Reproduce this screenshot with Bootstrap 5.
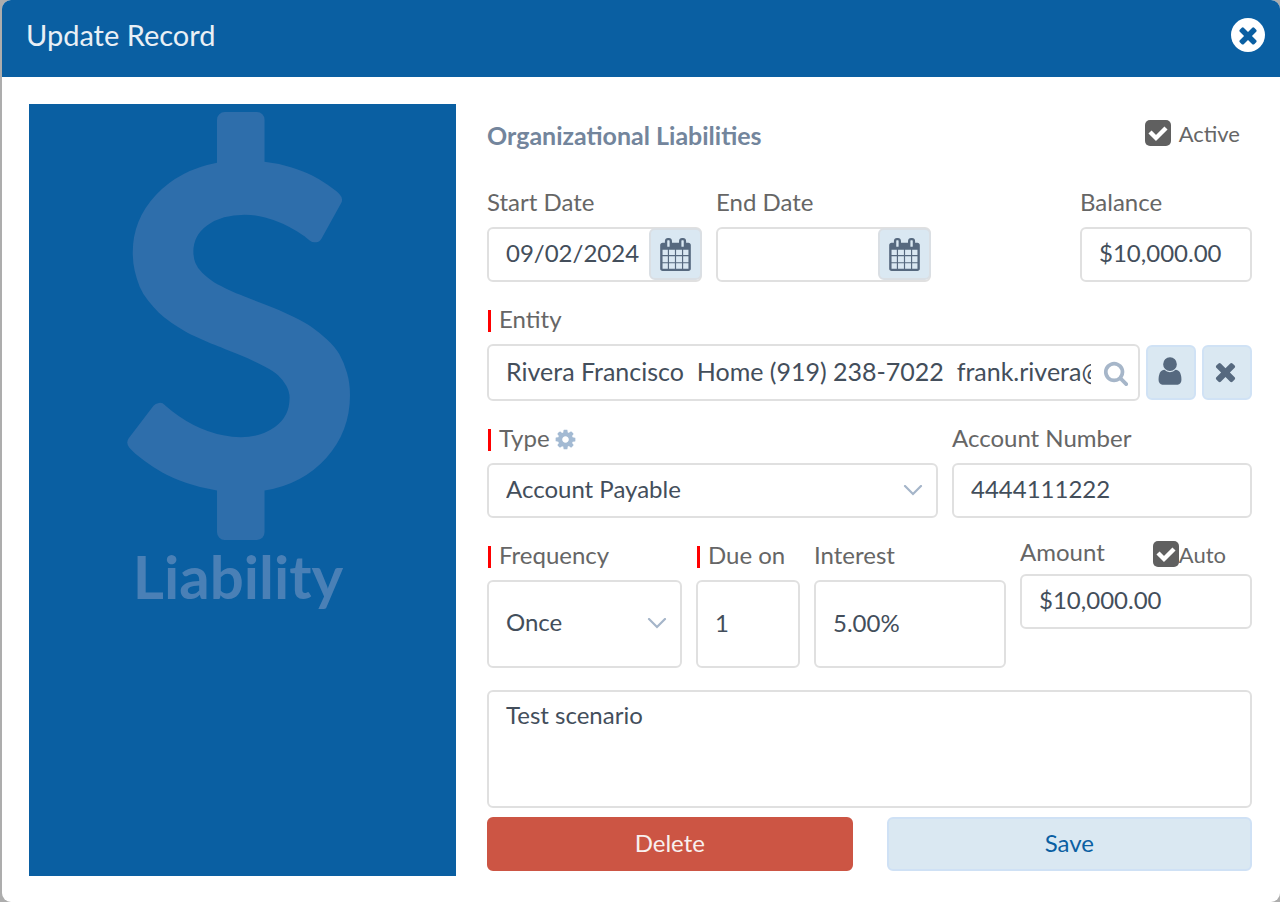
<!DOCTYPE html>
<html lang="en">
<head>
<meta charset="utf-8">
<meta name="viewport" content="width=device-width, initial-scale=1">
<title>Update Record</title>
<link href="https://cdn.jsdelivr.net/npm/bootstrap@5.3.0/dist/css/bootstrap.min.css" rel="stylesheet">
<style>
:root { --brand: #0a5fa2; --ink: #434e5b; --label: #666; --line: #e0e0e0; --pale: #dae8f2; --slate: #56697f; }
body { background: #adadad; font-family: Lato, "Open Sans", sans-serif; font-size: 24px; line-height: 24px; color: var(--ink); }
.dialog-box { margin-left: 2px; min-height: 100vh; border-radius: 9px; overflow: hidden; }
.dialog-head { background: var(--brand); height: 77px; padding: 0 15px 8px 24px; }
.dialog-head h1 { font-size: 29px; line-height: 36px; font-weight: 400; color: #e9eff5; }
.round-close { width: 34px; height: 34px; color: var(--brand); }
.dialog-main { display: grid; grid-template-columns: 427fr 765fr; gap: 31px; padding: 27px 28px 26px 27px; }
.kind-panel { background: var(--brand); padding-top: 8px; padding-right: 9px; }
.kind-panel svg { fill: #2e6eab; }
.kind-name { font-size: 60px; line-height: 64px; font-weight: 700; color: #4a80b6; margin-top: 4px; }
.form-side { min-width: 0; padding-bottom: 5px; }
.form-top { height: 62px; margin-bottom: 25px; }
.form-top h2 { font-size: 25px; line-height: 24px; color: #73859c; font-weight: 700; }
label { color: var(--label); white-space: nowrap; }
.field-label { display: flex; align-items: center; margin-bottom: 12px; height: 24px; padding-bottom: 2px; }
.needed::before { content: ""; width: 3px; height: 22px; background: #f00; margin: 4px 8px 0 1px; }
.form-line { display: grid; gap: 14px; margin-bottom: 26px; }
.dates { grid-template-columns: 215fr 215fr 121fr 172fr; }
.kinds { grid-template-columns: 451fr 300fr; margin-bottom: 22px; }
.terms { grid-template-columns: 195fr 104fr 192fr 232fr; margin-bottom: 22px; }
.form-line > div { min-width: 0; }
.field { height: 55px; border: 2px solid var(--line); border-radius: 6px; padding: 0 16px 4px 17px; font-size: 24px; line-height: 28px; color: var(--ink); background-color: #fff; }
.field-tall { height: 88px; }
.with-button { display: flex; padding: 0; }
.with-button input { border: 0; outline: 0; min-width: 0; flex: 1; padding: 0 0 4px 17px; color: inherit; background: transparent; }
.icon-btn { background: var(--pale); border: 2px solid #d0e2f5; border-radius: 6px; color: var(--slate); padding: 0; display: flex; align-items: center; justify-content: center; flex: none; }
.date-btn { width: 53px; border-color: #dadfe4; margin: -1px -2px 0 0; }
.side-btn { width: 50px; height: 55px; }
.side-btn svg { margin-bottom: 3px; margin-right: 3px; }
.entity-row { display: flex; align-items: center; gap: 6px; height: 57px; }
.entity-field { height: 57px; flex: 1; min-width: 0; }
.entity-field input { font-size: 25px; }
.search-btn { border: 0; background: none; padding: 1px 9px 0 12px; color: #a6b6c9; flex: none; }
select.field { background-position: right 13px center; background-size: 20px 12px; background-image: url("data:image/svg+xml,%3Csvg xmlns='http://www.w3.org/2000/svg' viewBox='0 0 20 12'%3E%3Cpath d='M2 1l8 8 8-8' fill='none' stroke='%23a5b5c9' stroke-width='2.2' stroke-linecap='round'/%3E%3C/svg%3E"); }
.tick { width: 26px; height: 26px; margin: 0; border: 0; border-radius: 5px !important; flex: none; }
.tick:checked { background-color: #606060; background-size: 26px; background-image: url("data:image/svg+xml,%3Csvg xmlns='http://www.w3.org/2000/svg' viewBox='0 0 26 26'%3E%3Cpath d='M5 12l6 6L21 8' fill='none' stroke='%23fff' stroke-width='4.4'/%3E%3C/svg%3E"); }
.check-text { font-size: 22px; padding-top: 2px; }
.terms > .lowered { padding-top: 4px; }
.amount-head { height: 24px; margin-bottom: 10px; padding-right: 26px; }
.note { height: 118px; padding: 9px 16px 10px 17px; resize: none; margin-bottom: 9px; }
.form-end { gap: 34px; }
.form-end .btn { height: 54px; flex: 1; font-size: 24px; line-height: 24px; border-radius: 6px; border-width: 2px; padding: 0 0 3px; }
.btn-remove, .btn-remove:hover { background: #cc5544; border-color: #cc5544; color: #f8f0ef; }
.btn-keep, .btn-keep:hover { background: var(--pale); border-color: #cfe1f5; color: var(--brand); }
</style>
</head>
<body>
<svg class="d-none" aria-hidden="true">
  <symbol id="times" viewBox="0 0 1792 1792"><path d="M1490 1322q0 40-28 68l-136 136q-28 28-68 28t-68-28l-294-294-294 294q-28 28-68 28t-68-28l-136-136q-28-28-28-68t28-68l294-294-294-294q-28-28-28-68t28-68l136-136q28-28 68-28t68 28l294 294 294-294q28-28 68-28t68 28l136 136q28 28 28 68t-28 68l-294 294 294 294q28 28 28 68z"/></symbol>
  <symbol id="calendar" viewBox="0 0 1792 1792"><path d="M192 1664h288v-288h-288v288zm352 0h320v-288h-320v288zm-352-352h288v-320h-288v320zm352 0h320v-320h-320v320zm-352-384h288v-288h-288v288zm736 736h320v-288h-320v288zm-384-736h320v-288h-320v288zm768 736h288v-288h-288v288zm-384-352h320v-320h-320v320zm-352-864v-288q0-13-9.500-22.500t-22.500-9.500h-64q-13 0-22.500 9.500t-9.500 22.500v288q0 13 9.500 22.500t22.500 9.500h64q13 0 22.500-9.500t9.500-22.500zm736 864h288v-320h-288v320zm-384-384h320v-288h-320v288zm384 0h288v-288h-288v288zm32-480v-288q0-13-9.500-22.500t-22.500-9.500h-64q-13 0-22.500 9.500t-9.500 22.500v288q0 13 9.500 22.500t22.500 9.500h64q13 0 22.500-9.500t9.500-22.500zm384-64v1280q0 52-38 90t-90 38h-1408q-52 0-90-38t-38-90v-1280q0-52 38-90t90-38h128v-96q0-66 47-113t113-47h64q66 0 113 47t47 113v96h384v-96q0-66 47-113t113-47h64q66 0 113 47t47 113v96h128q52 0 90 38t38 90z"/></symbol>
</svg>

<main class="dialog-box bg-white">
  <header class="dialog-head d-flex align-items-center justify-content-between">
    <h1 class="m-0">Update Record</h1>
    <button type="button" class="round-close btn bg-white rounded-circle p-0 border-0 d-flex align-items-center justify-content-center" aria-label="Close">
      <svg width="26" height="26" fill="currentColor"><use href="#times"/></svg>
    </button>
  </header>

  <div class="dialog-main">
    <aside class="kind-panel d-flex flex-column align-items-center">
      <svg width="223" height="428" viewBox="44 0 934 1792" aria-hidden="true"><path d="M978 1185q0 153-99.500 263.500t-258.500 136.500v175q0 14-9 23t-23 9h-135q-13 0-22.500-9.500t-9.500-22.500v-175q-66-9-127.500-31t-101.500-44.500-74-48-46.500-37.500-17.500-18q-17-21-2-41l103-135q7-10 23-12 15-2 24 9l2 2q113 99 243 125 37 8 74 8 81 0 142.500-43t61.500-122q0-28-15-53t-33.500-42-58.500-37.500-66-32-80-32.500q-39-16-61.500-25t-61.500-26.500-62.500-31-56.500-35.500-53.500-42.500-43.500-49-35.500-58-21-66.500-8.500-78q0-138 98-242t255-134v-180q0-13 9.500-22.500t22.500-9.500h135q14 0 23 9t9 23v176q57 6 110.500 23t87 33.500 63.500 37.500 39 29 15 14q17 18 5 38l-81 146q-8 15-23 16-14 3-27-7-3-3-14.500-12t-39-26.500-58.500-32-74.500-26-85.500-11.500q-95 0-155 43t-60 111q0 26 8.500 48t29.500 41.500 39.500 33 56 31 60.500 27 70 27.500q53 20 81 31.500t76 35 75.500 42.500 62 50 53 63.500 31.500 76.500 13 94z"/></svg>
      <div class="kind-name">Liability</div>
    </aside>

    <form class="form-side">
      <div class="form-top d-flex align-items-center justify-content-between">
        <h2 class="m-0">Organizational Liabilities</h2>
        <div class="d-flex align-items-center gap-2 pe-2 me-1 pb-1">
          <input type="checkbox" class="form-check-input tick" id="active" checked>
          <label for="active" class="check-text">Active</label>
        </div>
      </div>

      <div class="form-line dates">
        <div>
          <label class="field-label" for="start">Start Date</label>
          <div class="field with-button">
            <input type="text" id="start" value="09/02/2024">
            <button type="button" class="icon-btn date-btn" aria-label="Pick start date"><svg width="33" height="33" fill="currentColor"><use href="#calendar"/></svg></button>
          </div>
        </div>
        <div>
          <label class="field-label" for="end">End Date</label>
          <div class="field with-button">
            <input type="text" id="end">
            <button type="button" class="icon-btn date-btn" aria-label="Pick end date"><svg width="33" height="33" fill="currentColor"><use href="#calendar"/></svg></button>
          </div>
        </div>
        <div></div>
        <div>
          <label class="field-label" for="balance">Balance</label>
          <input type="text" class="form-control field" id="balance" value="$10,000.00">
        </div>
      </div>

      <div class="form-line">
        <div>
          <label class="field-label needed" for="entity">Entity</label>
          <div class="entity-row">
            <div class="field with-button entity-field">
              <input type="text" id="entity" value="Rivera Francisco  Home (919) 238-7022  frank.rivera@example.com">
              <button type="button" class="search-btn" aria-label="Search"><svg class="d-block" width="26" height="26" viewBox="0 0 1792 1792" fill="currentColor"><path d="M1216 832q0-185-131.500-316.500t-316.500-131.500-316.500 131.500-131.500 316.500 131.500 316.500 316.500 131.500 316.500-131.500 131.500-316.500zm512 832q0 52-38 90t-90 38q-54 0-90-38l-343-342q-179 124-399 124-143 0-273.500-55.500t-225-150-150-225-55.500-273.500 55.500-273.500 150-225 225-150 273.500-55.500 273.500 55.500 225 150 150 225 55.500 273.500q0 220-124 399l343 343q37 37 37 90z"/></svg></button>
            </div>
            <button type="button" class="icon-btn side-btn" aria-label="Open contact"><svg width="32" height="32" viewBox="0 0 1792 1792" fill="currentColor"><path d="M1536 1399q0 109-62.500 187t-150.500 78h-854q-88 0-150.500-78t-62.500-187q0-85 8.500-160.500t31.500-152 58.500-131 94-89 134.500-34.500q131 128 313 128t313-128q76 0 134.500 34.500t94 89 58.500 131 31.500 152 8.500 160.500zm-256-887q0 159-112.500 271.500t-271.500 112.500-271.500-112.500-112.500-271.500 112.500-271.500 271.500-112.500 271.500 112.500 112.500 271.500z"/></svg></button>
            <button type="button" class="icon-btn side-btn" aria-label="Clear entity"><svg width="29" height="29" fill="currentColor"><use href="#times"/></svg></button>
          </div>
        </div>
      </div>

      <div class="form-line kinds">
        <div>
          <div class="d-flex">
            <label class="field-label needed" for="type">Type</label>
            <button type="button" class="btn border-0 p-0 ms-1 lh-1" aria-label="Type settings"><svg class="d-block mb-2 pb-1" width="23" height="27" viewBox="0 0 1792 1792" fill="#a3bad3"><path d="M1152 896q0-106-75-181t-181-75-181 75-75 181 75 181 181 75 181-75 75-181zm512-109v222q0 12-8 23t-20 13l-185 28q-19 54-39 91 35 50 107 138 10 12 10 25t-9 23q-27 37-99 108t-94 71q-12 0-26-9l-138-108q-44 23-91 38-16 136-29 186-7 28-36 28h-222q-14 0-24.500-8.500t-11.500-21.500l-28-184q-49-16-90-37l-141 107q-10 9-25 9-14 0-25-11-126-114-165-168-7-10-7-23 0-12 8-23 15-21 51-66.500t54-70.500q-27-50-41-99l-183-27q-13-2-21-12.500t-8-23.500v-222q0-12 8-23t19-13l186-28q14-46 39-92-40-57-107-138-10-12-10-24 0-10 9-23 26-36 98.500-107.500t94.500-71.500q13 0 26 10l138 107q44-23 91-38 16-136 29-186 7-28 36-28h222q14 0 24.500 8.500t11.500 21.500l28 184q49 16 90 37l142-107q9-9 24-9 13 0 25 10 129 119 165 170 7 8 7 22 0 12-8 23-15 21-51 66.500t-54 70.500q26 50 41 98l183 28q13 2 21 12.500t8 23.500z"/></svg></button>
          </div>
          <select class="form-select field" id="type"><option>Account Payable</option></select>
        </div>
        <div>
          <label class="field-label" for="account">Account Number</label>
          <input type="text" class="form-control field" id="account" value="4444111222">
        </div>
      </div>

      <div class="form-line terms">
        <div class="lowered">
          <label class="field-label needed" for="frequency">Frequency</label>
          <select class="form-select field field-tall" id="frequency"><option>Once</option></select>
        </div>
        <div class="lowered">
          <label class="field-label needed" for="due">Due on</label>
          <input type="text" class="form-control field field-tall" id="due" value="1">
        </div>
        <div class="lowered">
          <label class="field-label" for="interest">Interest</label>
          <input type="text" class="form-control field field-tall" id="interest" value="5.00%">
        </div>
        <div>
          <div class="amount-head d-flex align-items-center justify-content-between">
            <label for="amount">Amount</label>
            <div class="d-flex align-items-center pt-1">
              <input type="checkbox" class="form-check-input tick" id="auto" checked>
              <label for="auto" class="check-text">Auto</label>
            </div>
          </div>
          <input type="text" class="form-control field" id="amount" value="$10,000.00">
        </div>
      </div>

      <textarea class="form-control field note" aria-label="Notes">Test scenario</textarea>

      <div class="form-end d-flex">
        <button type="button" class="btn btn-remove">Delete</button>
        <button type="submit" class="btn btn-keep">Save</button>
      </div>
    </form>
  </div>
</main>
<script src="https://cdn.jsdelivr.net/npm/bootstrap@5.3.0/dist/js/bootstrap.bundle.min.js"></script>
</body>
</html>
